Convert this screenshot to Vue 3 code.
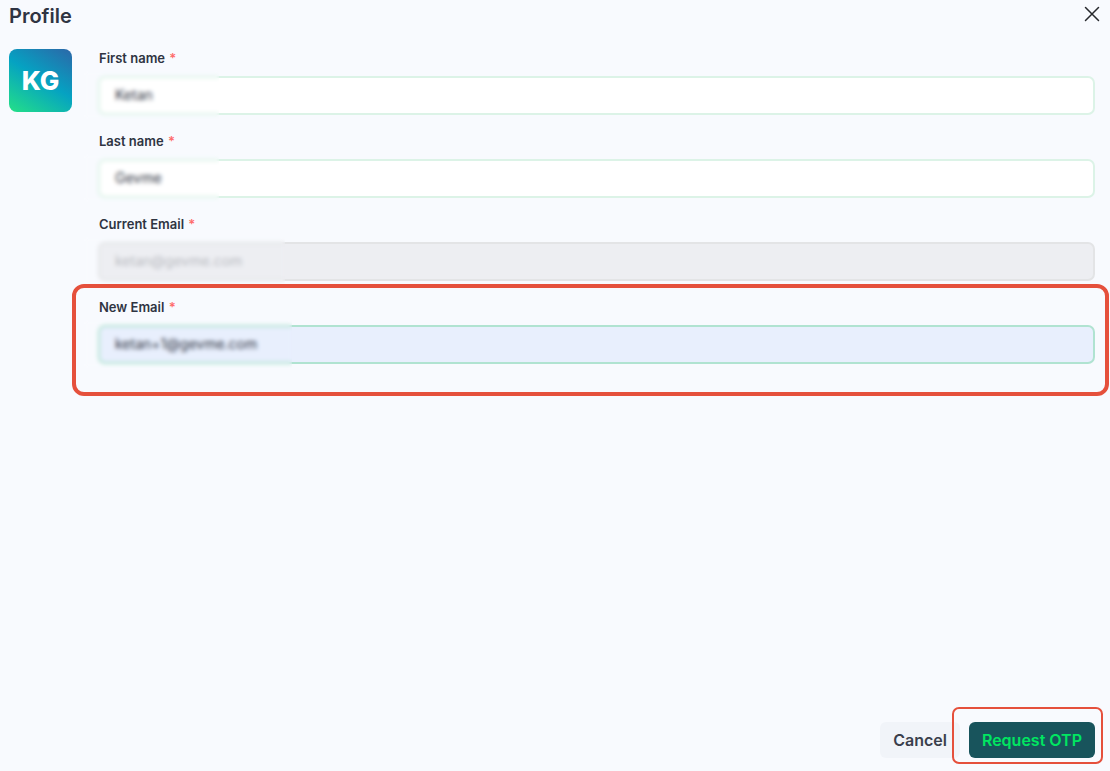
<script setup>
import { reactive } from 'vue'

const fields = reactive([
  { id: 'first-name', label: 'First name', type: 'text', value: 'Ketan', veil: 'veil-short' },
  { id: 'last-name', label: 'Last name', type: 'text', value: 'Gevme', veil: 'veil-short' },
  { id: 'current-email', label: 'Current Email', type: 'email', value: 'ketan@gevme.com', veil: 'veil-medium', disabled: true },
  { id: 'new-email', label: 'New Email', type: 'email', value: 'ketan+1@gevme.com', veil: 'veil-long', active: true },
])
</script>

<template>
  <form class="profile" @submit.prevent>
    <header class="header">
      <h1>Profile</h1>
      <button type="button" class="close" aria-label="Close">
        <svg viewBox="0 0 16 16" width="16" height="16" aria-hidden="true">
          <path d="M1.5 1.5 14.5 14.5M14.5 1.5 1.5 14.5" />
        </svg>
      </button>
    </header>

    <main class="content">
      <div class="avatar">KG</div>
      <div class="fields">
        <div v-for="field in fields" :key="field.id" class="field">
          <label :for="field.id">{{ field.label }} <span class="required">*</span></label>
          <div class="control">
            <input
              :id="field.id"
              v-model="field.value"
              :type="field.type"
              :disabled="field.disabled"
              :class="{ active: field.active }"
              required
            />
            <span class="veil" :class="field.veil"></span>
          </div>
          <span v-if="field.active" class="callout callout-field"></span>
        </div>
      </div>
    </main>

    <footer class="footer">
      <button type="button" class="button cancel">Cancel</button>
      <div class="submit">
        <button type="submit" class="button request">Request OTP</button>
        <span class="callout callout-button"></span>
      </div>
    </footer>
  </form>
</template>

<style>
body {
  background: #f8fafe;
}
</style>

<style scoped>
.profile {
  box-sizing: border-box;
  min-height: 100vh;
  display: flex;
  flex-direction: column;
  padding: 3px 15px 13px 9px;
  background: #f8fafe;
  color: #2f3442;
  font-family: Inter, "Liberation Sans", sans-serif;
}

.header {
  display: flex;
  align-items: center;
  justify-content: space-between;
  height: 26px;
}

h1 {
  margin: 0;
  font-size: 20px;
  line-height: 26px;
  font-weight: 600;
}

.close {
  display: flex;
  padding: 0;
  margin: 0 -5px 4px 0;
  border: 0;
  background: none;
}

.close svg {
  fill: none;
  stroke: #26282c;
  stroke-width: 1.5;
  stroke-linecap: round;
}

.content {
  flex: 1;
  display: flex;
  align-items: flex-start;
  gap: 26px;
  padding-top: 19px;
}

.avatar {
  display: flex;
  align-items: center;
  justify-content: center;
  flex: none;
  width: 63px;
  height: 63px;
  margin-top: 1px;
  border-radius: 8px;
  background: linear-gradient(32deg, #24e087 0%, #05a2c2 52%, #2c67a8 100%);
  color: #fff;
  font-size: 26px;
  font-weight: 800;
}

.fields {
  flex: 1;
  display: flex;
  flex-direction: column;
  gap: 16px;
}

.field {
  position: relative;
  display: flex;
  flex-direction: column;
  gap: 8px;
}

label {
  margin-left: 1px;
  font-size: 13px;
  line-height: 20px;
  font-weight: 600;
}

.required {
  margin-left: 1px;
  color: #ff6b6b;
}

.control {
  position: relative;
  display: flex;
}

input {
  box-sizing: border-box;
  width: 100%;
  height: 39px;
  padding: 0 15px 2px;
  border: 2px solid #dcf3e7;
  border-radius: 7px;
  outline: 0;
  background: #fff;
  color: #2f3442;
  font: 400 14px Inter, "Liberation Sans", sans-serif;
}

input:disabled {
  border-color: #e3e4e6;
  background: #edeef2;
  color: #b9bbc1;
}

input.active {
  border-color: #b0e3d1;
  background: #e8effd;
}

.veil {
  position: absolute;
  top: -5px;
  bottom: -4px;
  left: -14px;
  backdrop-filter: blur(2px);
  pointer-events: none;
}

.veil-short {
  width: 135px;
}

.veil-medium {
  width: 201px;
}

.veil-long {
  width: 208px;
}

.callout {
  position: absolute;
  border: 4px solid #e5503c;
  border-radius: 12px;
  pointer-events: none;
}

.callout-field {
  inset: -13px -14px -32px -26px;
}

.callout-button {
  inset: -15px -8px -6px -17px;
  border-width: 2px;
  border-radius: 7px;
}

.footer {
  display: flex;
  justify-content: flex-end;
  gap: 9px;
}

.submit {
  position: relative;
  display: flex;
}

.button {
  height: 36px;
  padding: 0 13px 1px;
  border: 0;
  border-radius: 6px;
  font: 600 16px Inter, "Liberation Sans", sans-serif;
}

.cancel {
  background: #f1f4f9;
  color: #3a3f4c;
}

.request {
  background: #18545c;
  color: #00e661;
}
</style>
